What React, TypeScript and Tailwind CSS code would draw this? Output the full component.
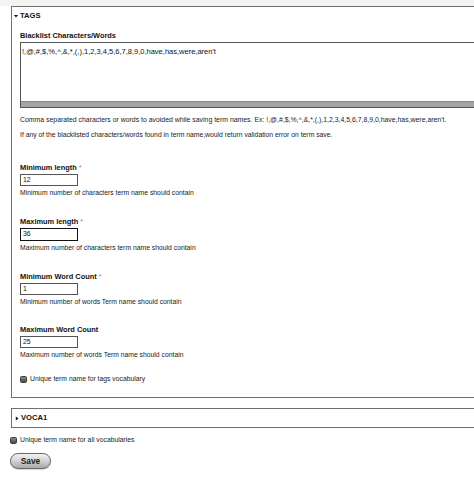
import React from "react";

const font = { fontFamily: '"Liberation Sans", Arial, sans-serif' };

function Checkbox() {
  return (
    <span className="inline-block w-[7px] h-[7px] rounded-[1.5px] border border-[#3a3a3a] bg-gradient-to-b from-[#8a8a8a] to-[#4a4a4a] shrink-0" />
  );
}

function Field({
  label,
  required,
  value,
  help,
  focused,
  mt,
}: {
  label: string;
  required?: boolean;
  value: string;
  help: string;
  focused?: boolean;
  mt: string;
}) {
  return (
    <div className={`flex flex-col ${mt}`}>
      <div className="h-[10px] leading-[10px] text-[7.4px] font-bold text-[#111]">
        {label}
        {required && <span className="font-normal text-[#e06a6a]"> *</span>}
      </div>
      <div
        className={`mt-[1px] w-[58px] ${
          focused ? "h-[13px] border-[1.5px] border-[#111]" : "h-[12px] border border-[#555]"
        } bg-white flex items-center pl-[2px] text-[6.9px] text-[#111]`}
      >
        {value}
      </div>
      <div className="mt-[2px] h-[9px] leading-[9px] text-[6.8px] text-[#222]">{help}</div>
    </div>
  );
}

export default function App() {
  return (
    <div className="w-[474px] h-[477px] overflow-hidden bg-white" style={font}>
      <div className="h-[6px] bg-[#f3f3f3]" />
      <div className="ml-[11px] w-[490px] border-t border-l border-b border-[#707070] pl-[8px] pb-[13px]">
        <div className="h-[18px] flex items-center -ml-[6px]">
          <svg width="4" height="4" viewBox="0 0 4 4" className="mr-[2px]">
            <path d="M0 1 L4 1 L2 3.5 Z" fill="#111" />
          </svg>
          <span className="text-[7.6px] font-bold text-[#111] leading-none">TAGS</span>
        </div>
        <div className="mt-[6px] h-[10px] leading-[10px] text-[7.4px] font-bold text-[#111]">
          Blacklist Characters/Words
        </div>
        <div className="mt-[1px] w-[470px] h-[66px] border border-[#555] flex flex-col">
          <div className="flex-1 bg-white pl-[1px] pt-[4px] text-[7.5px] leading-[9px] text-[#111]">
            !,@,#,$,%,^,&amp;,*,(,),1,2,3,4,5,6,7,8,9,0,have,has,were,aren't
          </div>
          <div className="h-[6px] bg-[#a4a4a4] border-t border-[#8a8a8a]" />
        </div>
        <div className="mt-[7px] h-[9px] leading-[9px] text-[6.9px] text-[#222] whitespace-nowrap">
          Comma separated characters or words to avoided while saving term names. Ex:
          !,@,#,$,%,^,&amp;,*,(,),1,2,3,4,5,6,7,8,9,0,have,has,were,aren't.
        </div>
        <div className="mt-[6px] h-[9px] leading-[9px] text-[6.8px] text-[#222] whitespace-nowrap">
          If any of the blacklisted characters/words found in term name,would return validation error on term save.
        </div>
        <Field
          mt="mt-[24px]"
          label="Minimum length"
          required
          value="12"
          help="Minimum number of characters term name should contain"
        />
        <Field
          mt="mt-[20px]"
          label="Maximum length"
          required
          value="36"
          focused
          help="Maximum number of characters term name should contain"
        />
        <Field
          mt="mt-[20px]"
          label="Minimum Word Count"
          required
          value="1"
          help="Minimum number of words Term name should contain"
        />
        <Field
          mt="mt-[19px]"
          label="Maximum Word Count"
          value="25"
          help="Maximum number of words Term name should contain"
        />
        <div className="mt-[15px] h-[10px] flex items-center gap-[3px]">
          <Checkbox />
          <span className="text-[6.8px] text-[#222] leading-none">Unique term name for tags vocabulary</span>
        </div>
      </div>
      <div className="mt-[10px] ml-[11px] w-[490px] h-[20px] border-t border-l border-b border-[#707070] flex items-center pl-[3px]">
        <svg width="4" height="5" viewBox="0 0 4 5" className="mr-[2px]">
          <path d="M0.8 0.5 L3.5 2.5 L0.8 4.5 Z" fill="#111" />
        </svg>
        <span className="text-[7.6px] font-bold text-[#111] leading-none">VOCA1</span>
      </div>
      <div className="mt-[7px] ml-[10px] h-[10px] flex items-center gap-[3px]">
        <Checkbox />
        <span className="text-[6.8px] text-[#222] leading-none">Unique term name for all vocabularies</span>
      </div>
      <div className="mt-[8px] ml-[10px] w-[41px] h-[16px] rounded-full border border-[#6a6a6a] bg-gradient-to-b from-[#f2f2f2] via-[#d2d2d2] to-[#a8a8a8] flex items-center justify-center shadow-[0_0.5px_1px_rgba(0,0,0,0.3)]">
        <span className="text-[8.4px] font-bold text-[#222] leading-none">Save</span>
      </div>
    </div>
  );
}
